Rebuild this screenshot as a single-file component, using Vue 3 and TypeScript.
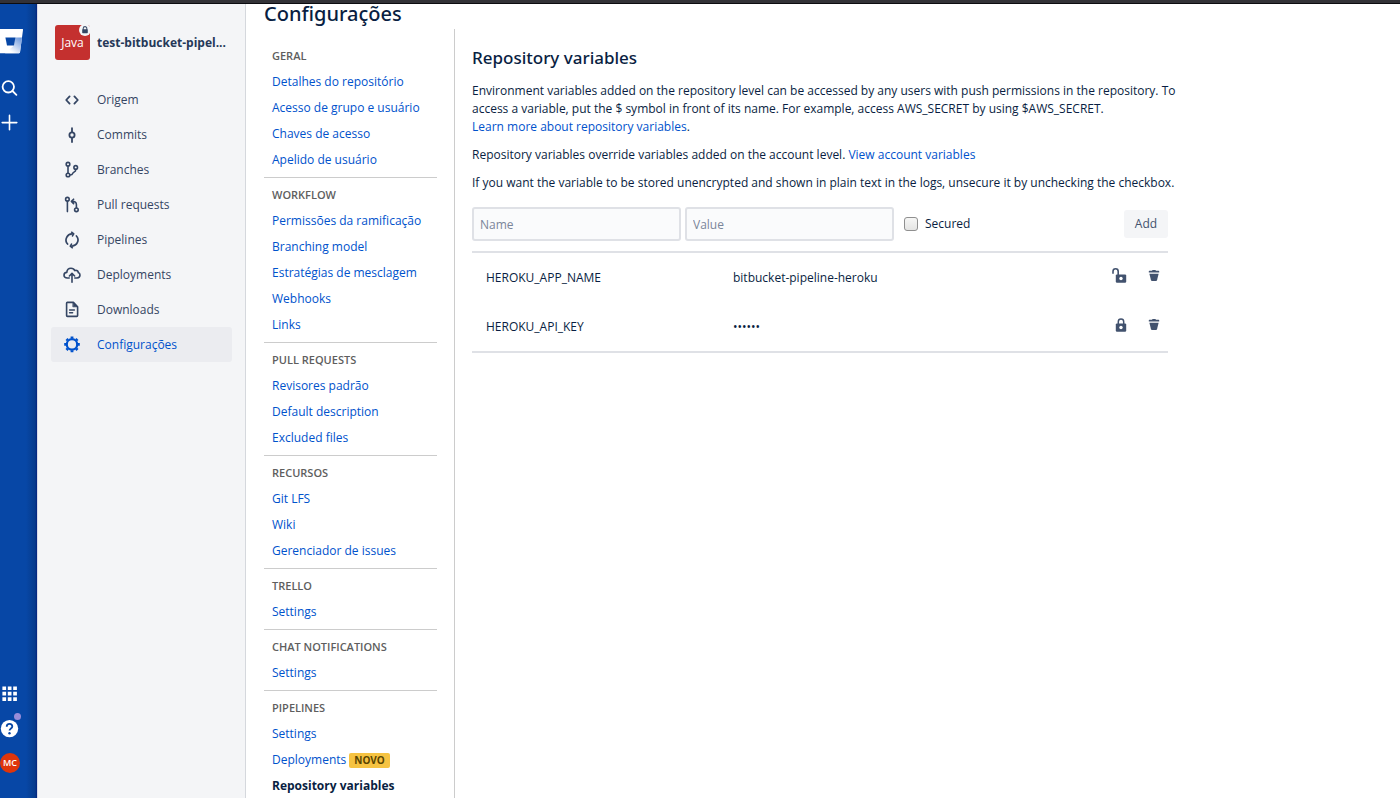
<script setup lang="ts">
import { ref } from 'vue'

interface NavItem {
  id: string
  label: string
  active?: boolean
}

interface SettingsLink {
  label: string
  badge?: string
  current?: boolean
}

interface SettingsGroup {
  title: string
  links: SettingsLink[]
}

interface Variable {
  name: string
  value: string
  secured: boolean
}

const navItems: NavItem[] = [
  { id: 'source', label: 'Origem' },
  { id: 'commits', label: 'Commits' },
  { id: 'branches', label: 'Branches' },
  { id: 'pulls', label: 'Pull requests' },
  { id: 'pipelines', label: 'Pipelines' },
  { id: 'deployments', label: 'Deployments' },
  { id: 'downloads', label: 'Downloads' },
  { id: 'settings', label: 'Configurações', active: true },
]

const groups: SettingsGroup[] = [
  {
    title: 'GERAL',
    links: [
      { label: 'Detalhes do repositório' },
      { label: 'Acesso de grupo e usuário' },
      { label: 'Chaves de acesso' },
      { label: 'Apelido de usuário' },
    ],
  },
  {
    title: 'WORKFLOW',
    links: [
      { label: 'Permissões da ramificação' },
      { label: 'Branching model' },
      { label: 'Estratégias de mesclagem' },
      { label: 'Webhooks' },
      { label: 'Links' },
    ],
  },
  {
    title: 'PULL REQUESTS',
    links: [{ label: 'Revisores padrão' }, { label: 'Default description' }, { label: 'Excluded files' }],
  },
  {
    title: 'RECURSOS',
    links: [{ label: 'Git LFS' }, { label: 'Wiki' }, { label: 'Gerenciador de issues' }],
  },
  { title: 'TRELLO', links: [{ label: 'Settings' }] },
  { title: 'CHAT NOTIFICATIONS', links: [{ label: 'Settings' }] },
  {
    title: 'PIPELINES',
    links: [
      { label: 'Settings' },
      { label: 'Deployments', badge: 'NOVO' },
      { label: 'Repository variables', current: true },
    ],
  },
]

const variables = ref<Variable[]>([
  { name: 'HEROKU_APP_NAME', value: 'bitbucket-pipeline-heroku', secured: false },
  { name: 'HEROKU_API_KEY', value: '••••••', secured: true },
])

const name = ref('')
const value = ref('')
const secured = ref(false)

function addVariable() {
  if (!name.value) return
  variables.value.push({
    name: name.value,
    value: secured.value ? '••••••' : value.value,
    secured: secured.value,
  })
  name.value = ''
  value.value = ''
}

function removeVariable(index: number) {
  variables.value.splice(index, 1)
}
</script>

<template>
  <div class="page">
    <div class="topbar"></div>
    <div class="shell">
      <nav class="rail" aria-label="Global">
        <a href="#" class="logo" aria-label="Bitbucket">
          <svg width="23" height="26" viewBox="0 0 23 26">
            <defs>
              <linearGradient id="logo-shade" x1="1" y1="0.1" x2="0.35" y2="0.9">
                <stop offset="0" stop-color="#6f9add" />
                <stop offset="1" stop-color="#ffffff" />
              </linearGradient>
            </defs>
            <path d="M0 1H22.4Q23.2 1 23 2L20 24.2Q19.8 25.2 18.8 25.2H0Z" fill="#fff" />
            <path d="M15.2 9.5H22L20 24.2Q19.8 25.2 18.8 25.2H5L14 17.4Z" fill="url(#logo-shade)" />
            <path d="M5.4 9.5H15.4L14 17.4H7Z" fill="#0747a6" />
          </svg>
        </a>
        <button type="button" class="rail-item" aria-label="Search">
          <svg width="20" height="20" viewBox="0 0 20 20" fill="none" stroke="#fff" stroke-width="1.8">
            <circle cx="8.3" cy="8.8" r="5.7" />
            <path d="M12.5 13L16.4 16.9" stroke-linecap="round" />
          </svg>
        </button>
        <button type="button" class="rail-item" aria-label="Create">
          <svg width="20" height="20" viewBox="0 0 20 20" fill="none" stroke="#fff" stroke-width="1.6" stroke-linecap="round">
            <path d="M9.5 2.4V16.8M2.2 9.6H16.8" />
          </svg>
        </button>
        <div class="spacer"></div>
        <button type="button" class="rail-item" aria-label="Switch to">
          <svg width="20" height="20" viewBox="0 0 20 20" fill="#fff">
            <path d="M2.4 3.4h3.7v3.7H2.4zM7.8 3.4h3.7v3.7H7.8zM13.2 3.4h3.7v3.7h-3.7zM2.4 8.8h3.7v3.7H2.4zM7.8 8.8h3.7v3.7H7.8zM13.2 8.8h3.7v3.7h-3.7zM2.4 14.2h3.7v3.7H2.4zM7.8 14.2h3.7v3.7H7.8zM13.2 14.2h3.7v3.7h-3.7z" />
          </svg>
        </button>
        <button type="button" class="rail-item" aria-label="Help">
          <svg width="20" height="20" viewBox="0 0 20 20">
            <circle cx="9.5" cy="10.6" r="8.7" fill="#fff" />
            <path d="M6.7 8.7C6.7 6.9 7.9 5.9 9.5 5.9S12.3 6.9 12.3 8.5C12.3 10.5 9.5 10.4 9.5 12.6" fill="none" stroke="#0747a6" stroke-width="1.8" />
            <circle cx="9.5" cy="15.2" r="1.2" fill="#0747a6" />
          </svg>
          <span class="dot"></span>
        </button>
        <button type="button" class="rail-item" aria-label="Profile">
          <span class="avatar">MC</span>
        </button>
      </nav>

      <aside class="sidebar">
        <header class="repo">
          <div class="repo-tile">
            <span>Java</span>
            <span class="repo-lock">
              <svg width="12" height="12" viewBox="0 0 12 12">
                <path d="M4.2 6V4.4a1.8 1.8 0 0 1 3.6 0V6" fill="none" stroke="#42526e" stroke-width="1.1" />
                <rect x="3.2" y="5.3" width="5.6" height="3.9" rx="0.6" fill="#344563" />
              </svg>
            </span>
          </div>
          <span class="repo-name">test-bitbucket-pipel...</span>
        </header>
        <nav aria-label="Repository">
          <a v-for="item in navItems" :key="item.id" href="#" class="nav-item" :class="{ active: item.active }">
            <svg width="20" height="20" viewBox="0 0 20 20" fill="none" stroke="currentColor" stroke-width="1.8" stroke-linecap="round" stroke-linejoin="round">
              <template v-if="item.id === 'source'">
                <path d="M7.6 6.4L4.2 10L7.6 13.6M12.4 6.4L15.8 10L12.4 13.6" />
              </template>
              <template v-else-if="item.id === 'commits'">
                <circle cx="10" cy="10" r="2.6" />
                <path d="M10 3.2V7M10 13V17" />
              </template>
              <template v-else-if="item.id === 'branches'">
                <g stroke-width="1.6">
                  <circle cx="6" cy="4.2" r="1.8" />
                  <circle cx="6" cy="15" r="1.8" />
                  <circle cx="13.7" cy="7.4" r="1.8" />
                  <path d="M6 6.2V13M13.8 9.4C13.8 12.4 11 11.8 10.6 13.6C10.3 14.9 9.4 15 8 15" />
                </g>
              </template>
              <template v-else-if="item.id === 'pulls'">
                <g stroke-width="1.6">
                  <circle cx="5.4" cy="4.2" r="1.8" />
                  <path d="M5.4 6.2V16.6" />
                  <circle cx="14.4" cy="14.8" r="1.8" />
                  <path d="M14.4 12.8V9.6C14.4 7.4 13.2 6.4 9.8 6.4M11.6 4.2L9.4 6.4L11.6 8.6" />
                </g>
              </template>
              <template v-else-if="item.id === 'pipelines'">
                <path d="M5.6 14A6 6 0 0 1 10.6 4M14.4 6A6 6 0 0 1 9.4 16" stroke-width="1.7" />
                <path d="M9.6 2.2L11.8 3.9L10.4 6M10.4 17.8L8.2 16.1L9.6 14" stroke-width="1.5" />
              </template>
              <template v-else-if="item.id === 'deployments'">
                <path d="M7.2 13H5.2C3.2 13 2 11.8 2 10.2C2 8.6 3.2 7.4 4.8 7.4C5 4.8 6.8 3.2 9 3.2C10.8 3.2 12.2 4.2 12.8 5.6C15 5 16.2 6 16.3 7.6C17.4 8 18 8.9 18 10.1C18 11.8 16.8 13 15 13H12.8M10 17.2V8.8M7.4 11L10 8.4L12.6 11" stroke-width="1.6" />
              </template>
              <template v-else-if="item.id === 'downloads'">
                <path d="M11.4 2.4H5.4Q4.6 2.4 4.6 3.2V15.6Q4.6 16.4 5.4 16.4H14.8Q15.6 16.4 15.6 15.6V6.8Z" stroke-width="1.6" />
                <path d="M11.2 2.4L15.6 6.8H11.2Z" fill="currentColor" stroke-width="0.8" />
                <path d="M7.6 10H12.4M7.6 12.8H10.6" stroke-width="1.5" />
              </template>
              <template v-else>
                <circle cx="10" cy="9.4" r="5.2" stroke-width="2.2" />
                <path d="M10 1.6V3.6M10 15.2V17.2M2.2 9.4H4.2M15.8 9.4H17.8M4.5 3.9L5.9 5.3M14.1 13.5L15.5 14.9M15.5 3.9L14.1 5.3M4.5 14.9L5.9 13.5" stroke-width="2.8" stroke-linecap="butt" />
              </template>
            </svg>
            <span>{{ item.label }}</span>
          </a>
        </nav>
      </aside>

      <main class="content">
        <h1>Configurações</h1>
        <div class="columns">
          <nav class="settings" aria-label="Configurações">
            <section v-for="group in groups" :key="group.title" class="group">
              <h3>{{ group.title }}</h3>
              <ul>
                <li v-for="link in group.links" :key="link.label">
                  <a href="#" :class="{ current: link.current }">{{ link.label }}</a>
                  <span v-if="link.badge" class="badge">{{ link.badge }}</span>
                </li>
              </ul>
            </section>
          </nav>

          <section class="panel">
            <h2>Repository variables</h2>
            <div class="intro">
              <p>
                Environment variables added on the repository level can be accessed by any users with push permissions
                in the repository. To<br />
                access a variable, put the $ symbol in front of its name. For example, access AWS_SECRET by using
                $AWS_SECRET.<br />
                <a href="#">Learn more about repository variables</a>.
              </p>
              <p>
                Repository variables override variables added on the account level.
                <a href="#">View account variables</a>
              </p>
              <p>
                If you want the variable to be stored unencrypted and shown in plain text in the logs, unsecure it by
                unchecking the checkbox.
              </p>
            </div>

            <form class="form" @submit.prevent="addVariable">
              <input v-model="name" type="text" class="field" placeholder="Name" aria-label="Name" />
              <input v-model="value" type="text" class="field" placeholder="Value" aria-label="Value" />
              <label class="check">
                <input v-model="secured" type="checkbox" />
                <span>Secured</span>
              </label>
              <button type="submit" class="add">Add</button>
            </form>

            <table class="vars">
              <tbody>
                <tr v-for="(v, i) in variables" :key="v.name">
                  <td class="var-name">{{ v.name }}</td>
                  <td>{{ v.value }}</td>
                  <td class="var-actions">
                    <div class="actions">
                      <svg width="16" height="18" viewBox="0 0 16 18" role="img" :aria-label="v.secured ? 'Secured' : 'Unsecured'">
                        <path v-if="v.secured" d="M6.3 8.5V5.7a2.7 2.7 0 0 1 5.4 0V8.5" fill="none" stroke="#42526e" stroke-width="1.5" />
                        <path v-else d="M1 6.8V4.4a2.6 2.6 0 0 1 5.2 0V8.5" fill="none" stroke="#42526e" stroke-width="1.6" />
                        <rect x="3.8" y="7.4" width="10.4" height="8.4" rx="1.2" fill="#42526e" />
                        <circle cx="9" cy="11.5" r="1.7" fill="#fff" />
                      </svg>
                      <button type="button" class="trash" :aria-label="'Delete ' + v.name" @click="removeVariable(i)">
                        <svg width="12" height="14" viewBox="0 0 12 14" fill="#42526e">
                          <path d="M0.8 3.4V2.3Q0.8 1.8 1.4 1.8H4L4.6 1H7.4L8 1.8H10.6Q11.2 1.8 11.2 2.3V3.4Z" />
                          <path d="M1.4 4.7H10.6L9.1 11Q8.8 12 8 12H4Q3.2 12 2.9 11Z" />
                        </svg>
                      </button>
                    </div>
                  </td>
                </tr>
              </tbody>
            </table>
          </section>
        </div>
      </main>
    </div>
  </div>
</template>

<style>
body {
  margin: 0;
  background: #fff;
}
</style>

<style scoped>
.page {
  display: flex;
  flex-direction: column;
  height: 100vh;
  overflow: hidden;
  color: #091e42;
  font: 12px/18px 'Open Sans', 'Noto Sans', sans-serif;
}
.topbar {
  flex: none;
  height: 3px;
  background: #333237;
  border-bottom: 1px solid #0c0c10;
}
.shell {
  display: flex;
  flex: 1;
  min-height: 0;
}
a {
  color: #0052cc;
  text-decoration: none;
}
button {
  font: inherit;
  border: 0;
  padding: 0;
  background: none;
  cursor: pointer;
}
svg {
  display: block;
  flex: none;
}

.rail {
  display: flex;
  flex-direction: column;
  flex: none;
  box-sizing: border-box;
  width: 37px;
  padding: 24px 0 18px;
  background: linear-gradient(to right, #0747a6 26px, #063b8c 35px, #04237e 37px);
}
.logo {
  margin-bottom: 16px;
}
.rail-item {
  position: relative;
  display: flex;
  align-items: center;
  width: 20px;
  height: 35px;
}
.spacer {
  flex: 1;
}
.dot {
  position: absolute;
  top: 3px;
  left: 14px;
  width: 7px;
  height: 7px;
  border-radius: 50%;
  background: #998dd9;
}
.avatar {
  flex: none;
  width: 20px;
  border-radius: 50%;
  background: #de350b;
  color: #fff;
  font-size: 9px;
  font-weight: 600;
  line-height: 20px;
  text-align: center;
}

.sidebar {
  flex: none;
  box-sizing: border-box;
  width: 209px;
  padding: 21px 13px 0;
  border-left: 1px solid #d9dbe8;
  border-right: 1px solid #d5d8dd;
  background: #f4f5f7;
}
.repo {
  display: flex;
  align-items: center;
  gap: 7px;
  margin: 0 0 22px 4px;
}
.repo-tile {
  position: relative;
  flex: none;
  width: 35px;
  border-radius: 3px;
  background: #c4302f;
  color: #fff;
  line-height: 35px;
  text-align: center;
}
.repo-lock {
  position: absolute;
  top: -1px;
  right: -1px;
  border-radius: 50%;
  background: #f4f5f7;
}
.repo-name {
  color: #253858;
  font-weight: 700;
  white-space: nowrap;
}
.nav-item {
  display: flex;
  align-items: center;
  gap: 15px;
  height: 35px;
  padding-left: 11px;
  border-radius: 3px;
  color: #344563;
}
.nav-item.active {
  background: #ebecf0;
  color: #0052cc;
}

.content {
  display: flex;
  flex: 1;
  flex-direction: column;
  min-width: 0;
  padding-left: 18px;
}
h1,
h2 {
  color: #091e42;
  font-family: 'Noto Sans', 'Open Sans', sans-serif;
  font-weight: 500;
}
h1 {
  flex: none;
  margin: 0;
  font-size: 20px;
  line-height: 20px;
}
.columns {
  display: flex;
  flex: 1;
  min-height: 0;
  padding-top: 5px;
}
.settings {
  flex: none;
  width: 173px;
  padding: 10px 17px 0 0;
  border-right: 1px solid #ccc;
}
.group {
  padding: 0 8px 4px;
  border-bottom: 1px solid #ccc;
}
.group:last-child {
  border-bottom: 0;
}
h3 {
  margin: 0;
  padding: 8px 0 4px;
  color: #5e5e5e;
  font-size: 11px;
  font-weight: 600;
  line-height: 18px;
}
ul {
  margin: 0;
  padding: 0;
  list-style: none;
}
li {
  display: flex;
  align-items: center;
  gap: 3px;
  height: 26px;
  white-space: nowrap;
}
.current {
  color: #091e42;
  font-weight: 700;
}
.badge {
  padding: 0 5px;
  border-radius: 2px;
  background: #f6c342;
  color: #594300;
  font-size: 10px;
  font-weight: 700;
  line-height: 15px;
}

.panel {
  flex: 1;
  min-width: 0;
  max-width: 696px;
  padding: 18px 17px 0;
}
h2 {
  margin: 0 0 13px;
  font-size: 17px;
  line-height: 22px;
}
.intro {
  margin-right: -24px;
}
p {
  margin: 0 0 10px;
}
.form {
  display: flex;
  align-items: center;
  gap: 4px;
  margin-top: 15px;
  padding-bottom: 10px;
  border-bottom: 2px solid #dfe1e6;
}
.field {
  box-sizing: border-box;
  flex: 0 1 209px;
  min-width: 0;
  height: 34px;
  padding: 0 6px;
  border: 2px solid #dfe1e6;
  border-radius: 3px;
  background: #fafbfc;
  color: #091e42;
  font: inherit;
}
.field::placeholder {
  color: #7a869a;
  opacity: 1;
}
.check {
  display: flex;
  align-items: center;
  gap: 7px;
  margin-left: 6px;
}
.check input {
  appearance: none;
  width: 14px;
  height: 14px;
  margin: 0;
  border: 1px solid #8f8f8f;
  border-radius: 3px;
  background: linear-gradient(#f6f6f5, #e4e4e3);
}
.check input:checked {
  background: #0052cc;
}
.add {
  margin-left: auto;
  width: 44px;
  height: 28px;
  border-radius: 3px;
  background: #f4f5f7;
  color: #42526e;
}
.vars {
  width: 100%;
  border-spacing: 0;
  border-bottom: 2px solid #dfe1e6;
}
.vars td {
  height: 49px;
  padding: 0;
}
.vars .var-name {
  width: 247px;
  padding-left: 14px;
  box-sizing: border-box;
}
.vars tr td:nth-child(2) {
  padding-left: 14px;
}
.actions {
  display: flex;
  align-items: center;
  justify-content: flex-end;
  gap: 20px;
  padding: 0 8px 4px 0;
}
</style>
